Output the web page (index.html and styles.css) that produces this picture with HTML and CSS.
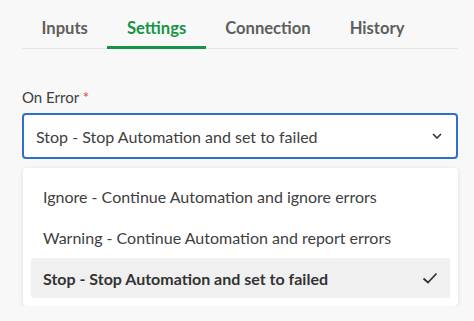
FILE: index.html
```html
<!DOCTYPE html>
<html lang="en">
<head>
  <meta charset="UTF-8">
  <title>Automation block settings</title>
  <link rel="stylesheet" href="styles.css">
</head>
<body>

  <div class="panel">
    <div class="tabs">
      <div class="tab">Inputs</div>
      <div class="tab active">Settings</div>
      <div class="tab">Connection</div>
      <div class="tab">History</div>
    </div>

    <div class="field">
      <label class="field-label">On Error <span class="required">*</span></label>
      <div class="select">
        <span>Stop - Stop Automation and set to failed</span>
        <svg class="chevron" width="10" height="6" viewBox="0 0 10 6">
          <path d="M1 1l4 4 4-4" fill="none" stroke="#333" stroke-width="1.6"/>
        </svg>
      </div>

      <ul class="menu">
        <li class="option">Ignore - Continue Automation and ignore errors</li>
        <li class="option">Warning - Continue Automation and report errors</li>
        <li class="option selected">
          <span>Stop - Stop Automation and set to failed</span>
          <svg class="check" width="16" height="12" viewBox="0 0 16 12">
            <path d="M1.5 6.5l4.5 4 8.5-9" fill="none" stroke="#333" stroke-width="1.8"/>
          </svg>
        </li>
      </ul>
    </div>
  </div>

</body>
</html>
```

FILE: styles.css
```css
:root {
  --green: #159447;
  --blue: #2f6fcb;
  --text: #404040;
  --muted: #5e5e5e;
  --line: #e6e6e6;
  --page: #f8f8f8;
}
body {
  margin: 0;
  font-family: Lato, 'Open Sans', sans-serif;
  background: var(--page);
  color: var(--text);
}
.panel {
  padding: 8px 16px 0 22px;
}
.tabs {
  display: flex;
  box-shadow: inset 0 -1px 0 var(--line);
}
.tab {
  padding: 10px 19.5px 8px;
  line-height: 20px;
  font-size: 16.6px;
  font-weight: 700;
  color: var(--muted);
  border-bottom: 3px solid transparent;
}
.tab.active {
  color: var(--green);
  border-bottom-color: var(--green);
}
.field {
  padding-top: 38px;
}
.field-label {
  display: block;
  font-size: 15px;
  line-height: 20px;
  margin-bottom: 6px;
}
.required {
  color: #e0453a;
}
.select {
  display: flex;
  align-items: center;
  justify-content: space-between;
  height: 42px;
  padding: 0 12px;
  border: 2px solid var(--blue);
  border-radius: 4px;
  background: white;
  font-size: 16px;
}
.chevron {
  margin-right: 2px;
}
.menu {
  list-style: none;
  margin: 9px 0 0 1px;
  padding: 8px;
  background: white;
  border-radius: 4px;
  box-shadow: 0 1px 5px rgba(0, 0, 0, 0.12);
}
.option {
  display: flex;
  align-items: center;
  justify-content: space-between;
  height: 40px;
  padding: 0 12px;
  margin-bottom: 1px;
  font-size: 16px;
  border-radius: 3px;
}
.option.selected {
  margin-bottom: 0;
  background: #f0f0f0;
  font-weight: 700;
  color: #333;
}
```
